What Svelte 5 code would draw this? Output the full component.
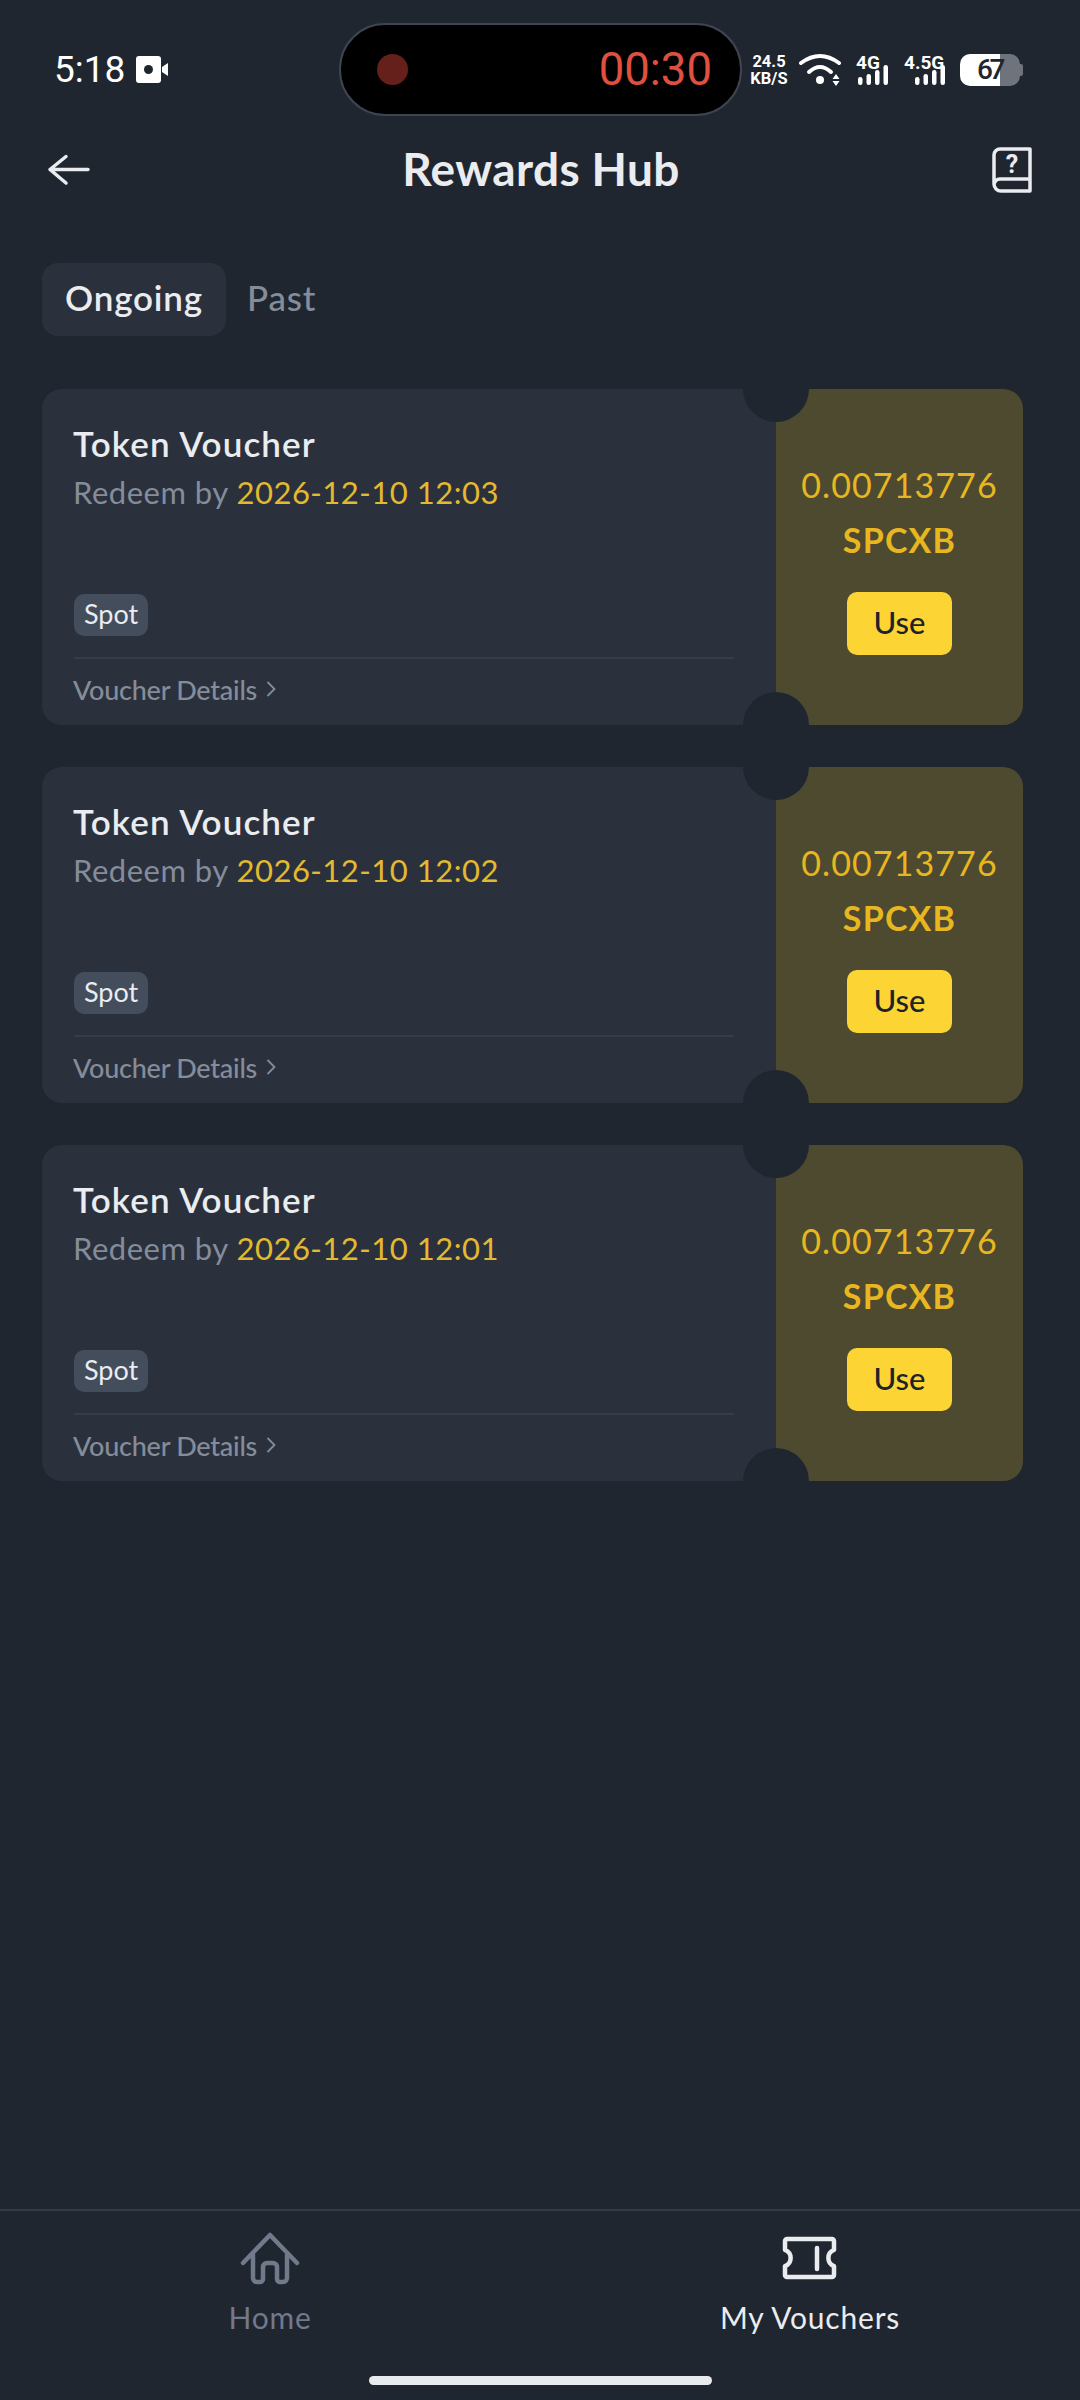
<script>
  const vouchers = [
    { time: '2026-12-10 12:03' },
    { time: '2026-12-10 12:02' },
    { time: '2026-12-10 12:01' }
  ];
</script>

<div class="page">
  <div class="status">
    <div class="clock">
      <span class="time">5:18</span>
      <svg class="cam" width="32" height="27" viewBox="0 0 32 27">
        <path d="M3 0h19a3 3 0 0 1 3 3v21a3 3 0 0 1-3 3H3a3 3 0 0 1-3-3V3a3 3 0 0 1 3-3z" fill="#fff" />
        <circle cx="12.500" cy="13.500" r="4.500" fill="#1f2630" />
        <path d="M26 11l6-4v13l-6-4z" fill="#fff" />
      </svg>
    </div>
    <div class="pill">
      <span class="dot"></span>
      <span class="timer">00:30</span>
    </div>
    <div class="icons">
      <div class="speed"><span>24.5</span><span>KB/S</span></div>
      <svg class="wifi" width="44" height="36" viewBox="0 0 44 36">
        <path d="M3 11Q22-3 41 11" fill="none" stroke="#fff" stroke-width="4" stroke-linecap="round" />
        <path d="M11 20Q22 10 33 20" fill="none" stroke="#fff" stroke-width="4" stroke-linecap="round" />
        <circle cx="22" cy="28" r="4" fill="#fff" />
        <path d="M34.500 27L38 22L41.500 27ZM34.500 29L38 34L41.500 29Z" fill="#fff" />
      </svg>
      <div class="signal s4">
        <span>4G</span>
        <svg width="34" height="20" viewBox="0 0 34 20">
          <rect x="2" y="12" width="4.500" height="8" rx="2.200" fill="#fff" />
          <rect x="10.500" y="9" width="4.500" height="11" rx="2.200" fill="#fff" />
          <rect x="19" y="5" width="4.500" height="15" rx="2.200" fill="#fff" />
          <rect x="27.500" y="0" width="4.500" height="20" rx="2.200" fill="#fff" />
        </svg>
      </div>
      <div class="signal s45">
        <span>4.5G</span>
        <svg width="34" height="20" viewBox="0 0 34 20">
          <rect x="2" y="12" width="4.500" height="8" rx="2.200" fill="#fff" />
          <rect x="10.500" y="9" width="4.500" height="11" rx="2.200" fill="#fff" />
          <rect x="19" y="5" width="4.500" height="15" rx="2.200" fill="#fff" />
          <rect x="27.500" y="0" width="4.500" height="20" rx="2.200" fill="#fff" />
        </svg>
      </div>
      <div class="battery">
        <div class="level"><span>67</span></div>
        <div class="nub"></div>
      </div>
    </div>
  </div>

  <header class="bar">
    <svg width="44" height="32" viewBox="0 0 44 32" class="back">
      <path d="M41 15.500H3M19 2.500L3 15.500L19 29" fill="none" stroke="#eaecef" stroke-width="3.500" stroke-linecap="round" stroke-linejoin="round" />
    </svg>
    <h1>Rewards Hub</h1>
    <svg width="42" height="46" viewBox="0 0 42 46" class="book">
      <path d="M39 2H9a6 6 0 0 0-6 6V37a7 7 0 0 0 7 7H39ZM3 38a6 6 0 0 1 6-6H39" fill="none" stroke="#eaecef" stroke-width="3.500" stroke-linejoin="round" />
      <text x="21" y="26" text-anchor="middle">?</text>
    </svg>
  </header>

  <div class="tabs">
    <div class="tab active">Ongoing</div>
    <div class="tab">Past</div>
  </div>

  <div class="list">
    {#each vouchers as v}
      <div class="card">
        <div class="main">
          <div class="title">Token Voucher</div>
          <div class="redeem">Redeem by <em>{v.time}</em></div>
          <div class="tag">Spot</div>
          <div class="rule"></div>
          <div class="details">
            Voucher Details
            <svg width="10" height="18" viewBox="0 0 10 18">
              <path d="M1.500 2L8.500 9L1.500 16" fill="none" stroke="#858c9a" stroke-width="1.800" />
            </svg>
          </div>
        </div>
        <div class="side">
          <div class="amount">0.00713776</div>
          <div class="coin">SPCXB</div>
          <button type="button">Use</button>
        </div>
        <span class="notch top"></span>
        <span class="notch bottom"></span>
      </div>
    {/each}
  </div>

  <nav class="tabbar">
    <div class="nav-item">
      <svg width="64" height="56" viewBox="0 0 64 56">
        <path d="M5 32L32 4L59 32M15 24V47a4 4 0 0 0 4 4h3a3 3 0 0 0 3-3V36a4 4 0 0 1 4-4h6a4 4 0 0 1 4 4V48a3 3 0 0 0 3 3h3a4 4 0 0 0 4-4V24" fill="none" stroke="#707a8a" stroke-width="4.500" stroke-linecap="round" stroke-linejoin="round" />
      </svg>
      <span>Home</span>
    </div>
    <div class="nav-item on">
      <svg width="58" height="56" viewBox="0 0 58 48">
        <path d="M6 4H51a2 2 0 0 1 2 2v9a8.500 8.500 0 0 0 0 16v9a2 2 0 0 1-2 2H6a2 2 0 0 1-2-2V31a8.500 8.500 0 0 0 0-16V6a2 2 0 0 1 2-2Z" fill="none" stroke="#eaecef" stroke-width="4.500" stroke-linejoin="round" />
        <path d="M36 13V34" stroke="#eaecef" stroke-width="4.500" stroke-linecap="round" />
      </svg>
      <span>My Vouchers</span>
    </div>
  </nav>
  <div class="home-bar"></div>
</div>

<style>
  :global(body) {
    background: #1f2630;
  }
  .page {
    width: 1080px;
    height: 2400px;
    display: flex;
    flex-direction: column;
    background: #1f2630;
    font-family: Lato, "Liberation Sans", sans-serif;
    color: #eaecef;
    overflow: hidden;
  }

  .status {
    height: 115px;
    padding-top: 23px;
    display: flex;
    align-items: flex-start;
  }
  .clock {
    width: 339px;
    height: 93px;
    padding-left: 54px;
    box-sizing: border-box;
    display: flex;
    align-items: center;
    gap: 11px;
  }
  .time {
    font: 400 37px Roboto, sans-serif;
    color: #fff;
  }
  .pill {
    width: 403px;
    height: 93px;
    box-sizing: border-box;
    background: #000;
    border: 2px solid #3e4450;
    border-radius: 46px;
    display: flex;
    align-items: center;
    justify-content: space-between;
    padding: 0 28px 0 36px;
  }
  .dot {
    width: 31px;
    height: 31px;
    border-radius: 50%;
    background: #66201c;
  }
  .timer {
    font: 400 45.500px Roboto, sans-serif;
    color: #e0503f;
  }
  .icons {
    height: 93px;
    display: flex;
    align-items: center;
    padding-left: 8px;
    position: relative;
  }
  .speed {
    width: 38px;
    display: flex;
    flex-direction: column;
    font: 700 16.500px/17px Roboto, sans-serif;
    color: #fff;
    text-align: center;
  }
  .wifi {
    margin-left: 10px;
  }
  .signal {
    display: flex;
    flex-direction: column;
    font: 700 19px/15px Roboto, sans-serif;
    color: #fff;
  }
  .signal svg {
    margin-top: -5px;
  }
  .s4 {
    margin-left: 14px;
    width: 34px;
  }
  .s45 {
    margin-left: 14px;
    width: 43px;
  }
  .s45 svg {
    margin-left: 9px;
  }
  .battery {
    margin-left: 13px;
    display: flex;
    align-items: center;
  }
  .level {
    width: 60px;
    height: 32px;
    border-radius: 10px;
    background: linear-gradient(90deg, #fff 0 40px, #6f737b 40px);
  }
  .level span {
    display: block;
    padding-left: 17px;
    font: 500 28px/32px Roboto, sans-serif;
    letter-spacing: -3.500px;
    color: #1f2630;
    white-space: nowrap;
  }
  .nub {
    width: 3px;
    height: 12px;
    background: #6f737b;
    border-radius: 0 2px 2px 0;
  }

  .bar {
    height: 64px;
    padding: 0 47px;
    display: flex;
    align-items: center;
    justify-content: space-between;
    position: relative;
  }
  .bar h1 {
    margin: 0 0 3px;
    font-size: 46px;
    font-weight: 700;
    letter-spacing: 0.4px;
    color: #eaecef;
  }
  .book text {
    font: 700 25px Roboto, sans-serif;
    fill: #eaecef;
  }

  .tabs {
    margin: 61px 0 53px 42px;
    display: flex;
    gap: 21px;
  }
  .tab {
    height: 73px;
    line-height: 68px;
    font-size: 35px;
    font-weight: 500;
    letter-spacing: 0.8px;
    color: #858c9a;
  }
  .tab.active {
    width: 184px;
    text-align: center;
    background: #2a313d;
    border-radius: 16px;
    color: #eaecef;
    font-weight: 600;
  }

  .list {
    display: flex;
    flex-direction: column;
    gap: 42px;
    padding-left: 42px;
  }
  .card {
    position: relative;
    width: 981px;
    height: 336px;
    display: flex;
    border-radius: 20px;
    overflow: hidden;
  }
  .main {
    width: 734px;
    box-sizing: border-box;
    background: #2a313d;
    padding: 34px 42px 16px 32px;
    display: flex;
    flex-direction: column;
  }
  .title {
    margin-left: -1px;
    font-size: 35px;
    line-height: 40px;
    font-weight: 600;
    letter-spacing: 1.1px;
    color: #eaecef;
  }
  .redeem {
    margin: 9px 0 0 -1px;
    font-size: 31px;
    line-height: 40px;
    letter-spacing: 0.5px;
    color: #858c9a;
  }
  .redeem em {
    font-style: normal;
    color: #e3b92f;
  }
  .tag {
    margin-top: auto;
    align-self: flex-start;
    height: 42px;
    padding: 0 10px;
    line-height: 40px;
    font-size: 27px;
    background: #434d5c;
    border-radius: 10px;
  }
  .rule {
    height: 2px;
    margin-top: 21px;
    background: #363d49;
  }
  .details {
    height: 40px;
    margin: 10px 0 0 -1px;
    display: flex;
    align-items: center;
    gap: 9px;
    font-size: 27px;
    font-weight: 500;
    letter-spacing: -0.25px;
    color: #858c9a;
  }
  .side {
    flex: 1;
    background: #4e4a30;
    padding-top: 76px;
    display: flex;
    flex-direction: column;
    align-items: center;
  }
  .amount {
    font-size: 34px;
    line-height: 40px;
    letter-spacing: 1.1px;
    color: #e8b71f;
  }
  .coin {
    margin-top: 15px;
    font-size: 34px;
    line-height: 40px;
    font-weight: 700;
    letter-spacing: 1.2px;
    color: #e8b71f;
  }
  button {
    margin-top: 32px;
    width: 105px;
    height: 63px;
    padding: 0 0 4px;
    border: none;
    border-radius: 10px;
    background: #fcd535;
    font-family: inherit;
    font-size: 31px;
    font-weight: 500;
    color: #1e2329;
  }
  .notch {
    position: absolute;
    left: 701px;
    width: 66px;
    height: 66px;
    border-radius: 50%;
    background: #1f2630;
  }
  .notch.top {
    top: -33px;
  }
  .notch.bottom {
    bottom: -33px;
  }

  .tabbar {
    margin-top: auto;
    height: 167px;
    box-sizing: border-box;
    border-top: 2px solid #343a46;
    padding-top: 20px;
    display: grid;
    grid-template-columns: 1fr 1fr;
  }
  .nav-item {
    display: flex;
    flex-direction: column;
    align-items: center;
    gap: 10px;
    font-size: 30px;
    line-height: 40px;
    letter-spacing: 0.8px;
    color: #707a8a;
  }
  .nav-item.on {
    color: #eaecef;
  }
  .home-bar {
    width: 343px;
    height: 9px;
    margin: 0 auto 15px;
    border-radius: 5px;
    background: #e8eaed;
  }
</style>
